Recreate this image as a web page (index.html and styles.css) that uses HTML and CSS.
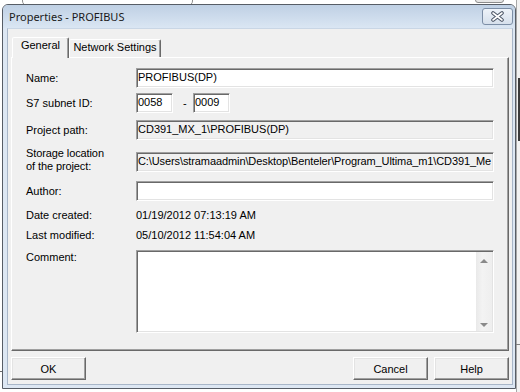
FILE: index.html
```html
<!DOCTYPE html>
<html>
<head>
<meta charset="utf-8">
<title>Properties - PROFIBUS</title>
<link rel="stylesheet" href="styles.css">
</head>
<body>
<div class="desk">
  <div class="behind behind-a"></div>
  <div class="behind behind-b"></div>
  <div class="behind behind-c"></div>
  <div class="behind behind-d"></div>
  <div class="behind behind-e"></div>
  <div class="behind behind-f"></div>

  <div class="window">
    <div class="titlebar">
      <span class="title">Properties - PROFIBUS</span>
      <div class="close">
        <svg width="15" height="11" viewBox="0 0 15 11">
          <path d="M3 2 L12 9 M12 2 L3 9" stroke="#4b5566" stroke-width="3.6" stroke-linecap="round" fill="none"/>
          <path d="M3 2 L12 9 M12 2 L3 9" stroke="#ffffff" stroke-width="1.6" stroke-linecap="round" fill="none"/>
        </svg>
      </div>
    </div>
    <div class="client">
      <div class="tabs">
        <div class="tab tab-general active">General</div>
        <div class="tab tab-net">Network Settings</div>
      </div>
      <div class="panel">
        <div class="row">
          <span class="label">Name:</span>
          <div class="field grow">PROFIBUS(DP)</div>
        </div>
        <div class="row gap5">
          <span class="label">S7 subnet ID:</span>
          <div class="field small">0058</div>
          <span class="dash">-</span>
          <div class="field small">0009</div>
        </div>
        <div class="row gap7">
          <span class="label">Project path:</span>
          <div class="field grow readonly">CD391_MX_1\PROFIBUS(DP)</div>
        </div>
        <div class="row gap12">
          <span class="label two">Storage location<br>of the project:</span>
          <div class="field grow readonly tight">C:\Users\stramaadmin\Desktop\Benteler\Program_Ultima_m1\CD391_Me</div>
        </div>
        <div class="row gap9">
          <span class="label">Author:</span>
          <div class="field grow"></div>
        </div>
        <div class="info gap8">
          <span class="label">Date created:</span>
          <span>01/19/2012 07:13:19 AM</span>
        </div>
        <div class="info gap7">
          <span class="label">Last modified:</span>
          <span>05/10/2012 11:54:04 AM</span>
        </div>
        <div class="comment gap8">
          <span class="label">Comment:</span>
          <div class="textarea">
            <div class="scrollbar">
              <div class="sb-btn"><span class="arrow-up"></span></div>
              <div class="sb-btn"><span class="arrow-down"></span></div>
            </div>
          </div>
        </div>
      </div>
      <div class="buttons">
        <div class="btn">OK</div>
        <div class="spacer"></div>
        <div class="btn">Cancel</div>
        <div class="btn">Help</div>
      </div>
    </div>
  </div>
</div>
</body>
</html>
```
FILE: styles.css
```css
* { box-sizing: border-box; }
html, body { margin: 0; padding: 0; }
body {
  width: 520px;
  height: 392px;
  overflow: hidden;
  background: #ffffff;
  font-family: "Liberation Sans", Arial, sans-serif;
  font-size: 11px;
  color: #000;
}
.desk {
  position: relative;
  width: 520px;
  height: 392px;
  padding: 4px 0 0 2px;
}

/* windows lying behind the dialog on the desktop */
.behind { position: absolute; }
.behind-a {
  left: 22px; top: -12px; width: 171px; height: 18px;
  border: 1px solid #8f8f8f; border-radius: 0 0 5px 5px;
}
.behind-b {
  left: 475px; top: -10px; width: 29px; height: 13px;
  border: 1px solid #8c8c8c; border-radius: 3px; background: #e6e6e6;
}
.behind-c {
  left: 516px; top: 0; width: 4px; height: 392px;
  background: #f2f2f2; border-left: 1px solid #a8a8a8;
}
.behind-d {
  left: 518px; top: 78px; width: 2px; height: 63px; background: #3c3c3c;
}
.behind-e {
  left: 516px; top: 344px; width: 4px; height: 1px; background: #808080;
}
.behind-f {
  left: 0; top: 371px; width: 3px; height: 1px; background: #6a6a6a;
}

.window {
  position: relative;
  z-index: 1;
  width: 514px;
  border: 1px solid #575d66;
  border-radius: 6px 6px 0 0;
  background: #dde7f3;
  padding: 0 2px 3px 4px;
}
.titlebar {
  height: 23px;
  margin: 0 -2px 0 -4px;
  padding: 0 2px 0 6px;
  border-radius: 5px 5px 0 0;
  background: linear-gradient(#bfd0e4, #dae6f3);
  display: flex;
  align-items: center;
  justify-content: space-between;
}
.title {
  font-family: "Noto Sans", "Open Sans", sans-serif;
  font-size: 11px;
  color: #1a1a1a;
}
.close {
  width: 31px;
  height: 17px;
  border: 1px solid #7c8ea6;
  border-radius: 3px;
  background: linear-gradient(#eef3f9, #d6e0ec);
  display: flex;
  align-items: center;
  justify-content: center;
}
.close svg { display: block; }

.client {
  width: 506px;
  border: 1px solid #a8b6c8;
  border-top-color: #c9d6e5;
  background: #f0f0f0;
  padding: 8px 3px 4px 3px;
}

.tabs {
  display: flex;
  align-items: flex-end;
  height: 20px;
  padding-left: 1px;
}
.tab {
  height: 18px;
  border: 1px solid;
  border-bottom: 0;
  border-color: #ffffff #696969 transparent #ffffff;
  box-shadow: inset -1px 0 0 #a0a0a0;
  border-radius: 2px 2px 0 0;
  background: #f0f0f0;
  padding-top: 1px;
  line-height: 13px;
  text-align: center;
  white-space: nowrap;
}
.tab.active {
  position: relative;
  z-index: 1;
  height: 21px;
  margin-bottom: -1px;
}
.tab-general { width: 57px; }
.tab-net { width: 92px; }

.panel {
  width: 498px;
  height: 294px;
  background: #f0f0f0;
  border: 1px solid;
  border-color: #ffffff #696969 #696969 #ffffff;
  box-shadow: inset -1px -1px 0 #a0a0a0;
  padding: 10px 14px 16px 14px;
}
.row {
  display: flex;
  align-items: center;
  height: 20px;
}
.gap5 { margin-top: 5px; }
.gap7 { margin-top: 7px; }
.gap8 { margin-top: 8px; }
.gap9 { margin-top: 9px; }
.gap12 { margin-top: 12px; }

.label {
  width: 110px;
  flex: none;
  line-height: 13px;
  white-space: nowrap;
}
.label.two { margin-top: -4px; letter-spacing: -0.1px; }

.field {
  height: 20px;
  border: 1px solid;
  border-color: #a0a0a0 #ffffff #ffffff #a0a0a0;
  box-shadow: inset 1px 1px 0 #696969, inset -1px -1px 0 #e3e3e3;
  background: #ffffff;
  padding: 0 0 0 1px;
  line-height: 16px;
  white-space: nowrap;
  overflow: hidden;
}
.field.grow { flex: 1; }
.field.small { width: 37px; flex: none; }
.field.readonly { background: #f0f0f0; }
.field.tight { letter-spacing: -0.1px; }
.dash {
  width: 20px;
  flex: none;
  padding-left: 10px;
}

.info {
  display: flex;
  height: 13px;
  line-height: 13px;
  white-space: nowrap;
}

.comment {
  display: flex;
  height: 83px;
}
.comment .label { padding-top: 1px; }
.textarea {
  flex: 1;
  height: 83px;
  border: 1px solid;
  border-color: #a0a0a0 #ffffff #ffffff #a0a0a0;
  box-shadow: inset 1px 1px 0 #696969, inset -1px -1px 0 #e3e3e3;
  background: #ffffff;
  padding: 1px;
  display: flex;
  justify-content: flex-end;
}
.scrollbar {
  width: 16px;
  background: linear-gradient(to right, #e9e9e9, #f3f3f3 40%, #eeeeee);
  display: flex;
  flex-direction: column;
  justify-content: space-between;
}
.sb-btn {
  height: 17px;
  display: flex;
  align-items: center;
  justify-content: center;
}
.arrow-up {
  width: 0; height: 0;
  border-left: 4px solid transparent;
  border-right: 4px solid transparent;
  border-bottom: 4px solid #8a8a8a;
}
.arrow-down {
  width: 0; height: 0;
  margin-top: 4px;
  border-left: 4px solid transparent;
  border-right: 4px solid transparent;
  border-top: 4px solid #8a8a8a;
}

.buttons {
  display: flex;
  margin-top: 6px;
  gap: 6px;
}
.spacer { flex: 1; }
.btn {
  width: 75px;
  height: 23px;
  border: 1px solid;
  border-color: #ffffff #696969 #696969 #ffffff;
  box-shadow: inset -1px -1px 0 #a0a0a0, inset 1px 1px 0 #e3e3e3;
  background: #f0f0f0;
  display: flex;
  align-items: center;
  justify-content: center;
}
```
